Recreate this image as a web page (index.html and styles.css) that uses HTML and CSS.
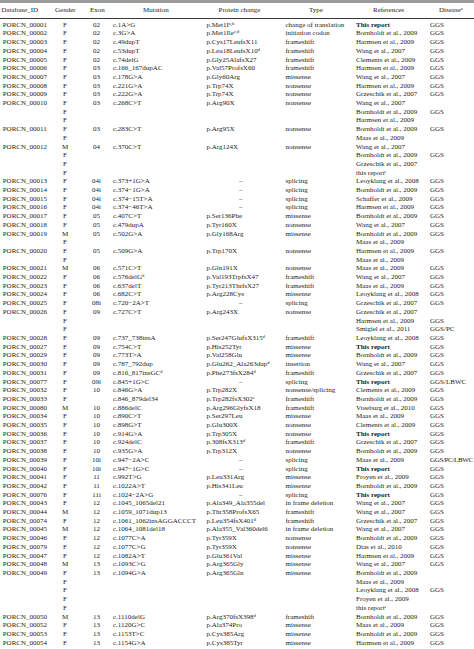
FILE: index.html
```html
<!DOCTYPE html>
<html>
<head>
<meta charset="utf-8">
<link rel="stylesheet" href="styles.css">
</head>
<body>
<table class="tbl">
<colgroup>
<col class="c-id"><col class="c-g"><col class="c-ex"><col class="c-mut"><col class="c-prot"><col class="c-type"><col class="c-ref"><col class="c-dis">
</colgroup>
<thead>
<tr>
<th class="h-id">Database_ID</th><th class="h-g">Gender</th><th class="h-ex">Exon</th><th class="h-mut">Mutation</th><th class="h-prot">Protein change</th><th class="h-type">Type</th><th class="h-ref">References</th><th class="h-dis">Disease<sup>a</sup></th>
</tr>
</thead>
<tbody>
<tr class="first"><td class="id">PORCN_00001</td><td class="g">F</td><td class="ex">02</td><td>c.1A&gt;G</td><td>p.Met1I<sup>a,b</sup></td><td>change of translation</td><td><b>This report</b></td><td>GGS</td></tr>
<tr><td class="id">PORCN_00002</td><td class="g">F</td><td class="ex">02</td><td>c.3G&gt;A</td><td>p.Met1Ile<sup>c,d</sup></td><td>initiation codon</td><td>Bornholdt et al., 2009</td><td>GGS</td></tr>
<tr><td class="id">PORCN_00003</td><td class="g">F</td><td class="ex">02</td><td>c.49dupT</td><td>p.Cys17LeufsX11</td><td>frameshift</td><td>Harmsen et al., 2009</td><td>GGS</td></tr>
<tr><td class="id">PORCN_00004</td><td class="g">F</td><td class="ex">02</td><td>c.53dupT</td><td>p.Leu18LeufsX10<sup>d</sup></td><td>frameshift</td><td>Wang et al., 2007</td><td>GGS</td></tr>
<tr><td class="id">PORCN_00005</td><td class="g">F</td><td class="ex">02</td><td>c.74delG</td><td>p.Gly25AlafsX27</td><td>frameshift</td><td>Clements et al., 2009</td><td>GGS</td></tr>
<tr><td class="id">PORCN_00006</td><td class="g">F</td><td class="ex">03</td><td>c.166_167dupAC</td><td>p.Val57ProfsX60</td><td>frameshift</td><td>Harmsen et al., 2009</td><td>GGS</td></tr>
<tr><td class="id">PORCN_00007</td><td class="g">F</td><td class="ex">03</td><td>c.178G&gt;A</td><td>p.Gly60Arg</td><td>missense</td><td>Wang et al., 2007</td><td>GGS</td></tr>
<tr><td class="id">PORCN_00008</td><td class="g">F</td><td class="ex">03</td><td>c.221G&gt;A</td><td>p.Trp74X</td><td>nonsense</td><td>Harmsen et al., 2009</td><td>GGS</td></tr>
<tr><td class="id">PORCN_00009</td><td class="g">F</td><td class="ex">03</td><td>c.222G&gt;A</td><td>p.Trp74X</td><td>nonsense</td><td>Grzeschik et al., 2007</td><td>GGS</td></tr>
<tr><td class="id">PORCN_00010</td><td class="g">F</td><td class="ex">03</td><td>c.268C&gt;T</td><td>p.Arg90X</td><td>nonsense</td><td>Wang et al., 2007</td><td></td></tr>
<tr><td class="id"></td><td class="g">F</td><td class="ex"></td><td></td><td></td><td></td><td>Bornholdt et al., 2009</td><td>GGS</td></tr>
<tr><td class="id"></td><td class="g">F</td><td class="ex"></td><td></td><td></td><td></td><td>Harmsen et al., 2009</td><td></td></tr>
<tr><td class="id">PORCN_00011</td><td class="g">F</td><td class="ex">03</td><td>c.283C&gt;T</td><td>p.Arg95X</td><td>nonsense</td><td>Bornholdt et al., 2009</td><td>GGS</td></tr>
<tr><td class="id"></td><td class="g">F</td><td class="ex"></td><td></td><td></td><td></td><td>Maas et al., 2009</td><td></td></tr>
<tr><td class="id">PORCN_00012</td><td class="g">M</td><td class="ex">04</td><td>c.370C&gt;T</td><td>p.Arg124X</td><td>nonsense</td><td>Wang et al., 2007</td><td></td></tr>
<tr><td class="id"></td><td class="g">F</td><td class="ex"></td><td></td><td></td><td></td><td>Bornholdt et al., 2009</td><td>GGS</td></tr>
<tr><td class="id"></td><td class="g">F</td><td class="ex"></td><td></td><td></td><td></td><td>Grzeschik et al., 2007</td><td></td></tr>
<tr><td class="id"></td><td class="g">F</td><td class="ex"></td><td></td><td></td><td></td><td>this report<sup>e</sup></td><td></td></tr>
<tr><td class="id">PORCN_00013</td><td class="g">F</td><td class="ex">04i</td><td>c.373+1G&gt;A</td><td class="dash">–</td><td>splicing</td><td>Leoyklang et al., 2008</td><td>GGS</td></tr>
<tr><td class="id">PORCN_00014</td><td class="g">F</td><td class="ex">04i</td><td>c.374−1G&gt;A</td><td class="dash">–</td><td>splicing</td><td>Bornholdt et al., 2009</td><td>GGS</td></tr>
<tr><td class="id">PORCN_00015</td><td class="g">F</td><td class="ex">04i</td><td>c.374−15T&gt;A</td><td class="dash">–</td><td>splicing</td><td>Schaffer et al., 2009</td><td>GGS</td></tr>
<tr><td class="id">PORCN_00016</td><td class="g">F</td><td class="ex">04i</td><td>c.374−46T&gt;A</td><td class="dash">–</td><td>splicing</td><td>Harmsen et al., 2009</td><td>GGS</td></tr>
<tr><td class="id">PORCN_00017</td><td class="g">F</td><td class="ex">05</td><td>c.407C&gt;T</td><td>p.Ser136Phe</td><td>missense</td><td>Bornholdt et al., 2009</td><td>GGS</td></tr>
<tr><td class="id">PORCN_00018</td><td class="g">F</td><td class="ex">05</td><td>c.479dupA</td><td>p.Tyr160X</td><td>nonsense</td><td>Wang et al., 2007</td><td>GGS</td></tr>
<tr><td class="id">PORCN_00019</td><td class="g">M</td><td class="ex">05</td><td>c.502G&gt;A</td><td>p.Gly168Arg</td><td>missense</td><td>Bornholdt et al., 2009</td><td>GGS</td></tr>
<tr><td class="id"></td><td class="g">F</td><td class="ex"></td><td></td><td></td><td></td><td>Maas et al., 2009</td><td></td></tr>
<tr><td class="id">PORCN_00020</td><td class="g">F</td><td class="ex">05</td><td>c.509G&gt;A</td><td>p.Trp170X</td><td>nonsense</td><td>Harmsen et al., 2009</td><td>GGS</td></tr>
<tr><td class="id"></td><td class="g">F</td><td class="ex"></td><td></td><td></td><td></td><td>Maas et al., 2009</td><td></td></tr>
<tr><td class="id">PORCN_00021</td><td class="g">M</td><td class="ex">06</td><td>c.571C&gt;T</td><td>p.Gln191X</td><td>nonsense</td><td>Maas et al., 2009</td><td>GGS</td></tr>
<tr><td class="id">PORCN_00022</td><td class="g">F</td><td class="ex">06</td><td>c.576delG<sup>d</sup></td><td>p.Val193TrpfsX47</td><td>frameshift</td><td>Wang et al., 2007</td><td>GGS</td></tr>
<tr><td class="id">PORCN_00023</td><td class="g">F</td><td class="ex">06</td><td>c.637delT</td><td>p.Tyr213ThrfsX27</td><td>frameshift</td><td>Maas et al., 2009</td><td>GGS</td></tr>
<tr><td class="id">PORCN_00024</td><td class="g">F</td><td class="ex">06</td><td>c.682C&gt;T</td><td>p.Arg228Cys</td><td>missense</td><td>Leoyklang et al., 2008</td><td>GGS</td></tr>
<tr><td class="id">PORCN_00025</td><td class="g">F</td><td class="ex">08i</td><td>c.720−2A&gt;T</td><td class="dash">–</td><td>splicing</td><td>Grzeschik et al., 2007</td><td>GGS</td></tr>
<tr><td class="id">PORCN_00026</td><td class="g">F</td><td class="ex">09</td><td>c.727C&gt;T</td><td>p.Arg243X</td><td>nonsense</td><td>Grzeschik et al., 2007</td><td></td></tr>
<tr><td class="id"></td><td class="g">F</td><td class="ex"></td><td></td><td></td><td></td><td>Harmsen et al., 2009</td><td>GGS</td></tr>
<tr><td class="id"></td><td class="g">F</td><td class="ex"></td><td></td><td></td><td></td><td>Smigiel et al., 2011</td><td>GGS/PC</td></tr>
<tr><td class="id">PORCN_00028</td><td class="g">F</td><td class="ex">09</td><td>c.737_738insA</td><td>p.Ser247GlufsX315<sup>d</sup></td><td>frameshift</td><td>Leoyklang et al., 2008</td><td>GGS</td></tr>
<tr><td class="id">PORCN_00027</td><td class="g">F</td><td class="ex">09</td><td>c.754C&gt;T</td><td>p.His252Tyr</td><td>missense</td><td><b>This report</b></td><td>GGS</td></tr>
<tr><td class="id">PORCN_00029</td><td class="g">F</td><td class="ex">09</td><td>c.773T&gt;A</td><td>p.Val258Glu</td><td>missense</td><td>Bornholdt et al., 2009</td><td>GGS</td></tr>
<tr><td class="id">PORCN_00030</td><td class="g">F</td><td class="ex">09</td><td>c.787_792dup</td><td>p.Glu262_Ala263dup<sup>d</sup></td><td>insertion</td><td>Wang et al., 2007</td><td>GGS</td></tr>
<tr><td class="id">PORCN_00031</td><td class="g">F</td><td class="ex">09</td><td>c.816_817insGC<sup>d</sup></td><td>p.Phe273fsX284<sup>d</sup></td><td>frameshift</td><td>Grzeschik et al., 2007</td><td>GGS</td></tr>
<tr><td class="id">PORCN_00077</td><td class="g">F</td><td class="ex">09i</td><td>c.845+1G&gt;C</td><td class="dash">–</td><td>splicing</td><td><b>This report</b></td><td>GGS/LBWC</td></tr>
<tr><td class="id">PORCN_00032</td><td class="g">F</td><td class="ex">10</td><td>c.846G&gt;A</td><td>p.Trp282X</td><td>nonsense/splicing</td><td>Clements et al., 2009</td><td>GGS</td></tr>
<tr><td class="id">PORCN_00033</td><td class="g">F</td><td class="ex"></td><td>c.846_879del34</td><td>p.Trp282fsX302<sup>e</sup></td><td>frameshift</td><td>Bornholdt et al., 2009</td><td>GGS</td></tr>
<tr><td class="id">PORCN_00080</td><td class="g">M</td><td class="ex">10</td><td>c.886delC</td><td>p.Arg296GlyfsX18</td><td>frameshift</td><td>Vreeburg et al., 2010</td><td>GGS</td></tr>
<tr><td class="id">PORCN_00034</td><td class="g">F</td><td class="ex">10</td><td>c.890C&gt;T</td><td>p.Ser297Leu</td><td>missense</td><td>Maas et al., 2009</td><td>GGS</td></tr>
<tr><td class="id">PORCN_00035</td><td class="g">F</td><td class="ex">10</td><td>c.898G&gt;T</td><td>p.Glu300X</td><td>nonsense</td><td>Clements et al., 2009</td><td>GGS</td></tr>
<tr><td class="id">PORCN_00036</td><td class="g">F</td><td class="ex">10</td><td>c.914G&gt;A</td><td>p.Trp305X</td><td>nonsense</td><td><b>This report</b></td><td>GGS</td></tr>
<tr><td class="id">PORCN_00037</td><td class="g">F</td><td class="ex">10</td><td>c.924delC</td><td>p.308fsX313<sup>d</sup></td><td>frameshift</td><td>Grzeschik et al., 2007</td><td>GGS</td></tr>
<tr><td class="id">PORCN_00038</td><td class="g">F</td><td class="ex">10</td><td>c.935G&gt;A</td><td>p.Trp312X</td><td>nonsense</td><td>Bornholdt et al., 2009</td><td>GGS</td></tr>
<tr><td class="id">PORCN_00039</td><td class="g">F</td><td class="ex">10i</td><td>c.947−2A&gt;C</td><td class="dash">–</td><td>splicing</td><td>Maas et al., 2009</td><td class="tight">GGS/PC/LBWC</td></tr>
<tr><td class="id">PORCN_00040</td><td class="g">F</td><td class="ex">10i</td><td>c.947−1G&gt;C</td><td class="dash">–</td><td>splicing</td><td><b>This report</b></td><td>GGS</td></tr>
<tr><td class="id">PORCN_00041</td><td class="g">F</td><td class="ex">11</td><td>c.992T&gt;G</td><td>p.Leu331Arg</td><td>missense</td><td>Froyen et al., 2009</td><td>GGS</td></tr>
<tr><td class="id">PORCN_00042</td><td class="g">F</td><td class="ex">11</td><td>c.1022A&gt;T</td><td>p.His341Leu</td><td>missense</td><td>Bornholdt et al., 2009</td><td>GGS</td></tr>
<tr><td class="id">PORCN_00076</td><td class="g">F</td><td class="ex">11i</td><td>c.1024−2A&gt;G</td><td class="dash">–</td><td>splicing</td><td><b>This report</b></td><td>GGS</td></tr>
<tr><td class="id">PORCN_00043</td><td class="g">F</td><td class="ex">12</td><td>c.1045_1065del21</td><td>p.Ala349_Ala355del</td><td>in frame deletion</td><td>Wang et al., 2007</td><td>GGS</td></tr>
<tr><td class="id">PORCN_00044</td><td class="g">M</td><td class="ex">12</td><td>c.1059_1071dup13</td><td>p.Thr358ProfsX65</td><td>frameshift</td><td>Wang et al., 2007</td><td>GGS</td></tr>
<tr><td class="id">PORCN_00074</td><td class="g">F</td><td class="ex">12</td><td>c.1061_1062insAGGACCCT</td><td>p.Leu354fsX401<sup>d</sup></td><td>frameshift</td><td>Grzeschik et al., 2007</td><td>GGS</td></tr>
<tr><td class="id">PORCN_00045</td><td class="g">M</td><td class="ex">12</td><td>c.1064_1081del18</td><td>p.Ala355_Val360del6</td><td>in frame deletion</td><td>Wang et al., 2007</td><td>GGS</td></tr>
<tr><td class="id">PORCN_00046</td><td class="g">F</td><td class="ex">12</td><td>c.1077C&gt;A</td><td>p.Tyr359X</td><td>nonsense</td><td>Bornholdt et al., 2009</td><td>GGS</td></tr>
<tr><td class="id">PORCN_00079</td><td class="g">F</td><td class="ex">12</td><td>c.1077C&gt;G</td><td>p.Tyr359X</td><td>nonsense</td><td>Dias et al., 2010</td><td>GGS</td></tr>
<tr><td class="id">PORCN_00047</td><td class="g">F</td><td class="ex">12</td><td>c.1082A&gt;T</td><td>p.Glu361Val</td><td>missense</td><td>Harmsen et al., 2009</td><td>GGS</td></tr>
<tr><td class="id">PORCN_00048</td><td class="g">M</td><td class="ex">13</td><td>c.1093C&gt;G</td><td>p.Arg365Gly</td><td>missense</td><td>Wang et al., 2007</td><td>GGS</td></tr>
<tr><td class="id">PORCN_00049</td><td class="g">F</td><td class="ex">13</td><td>c.1094G&gt;A</td><td>p.Arg365Gln</td><td>missense</td><td>Bornholdt et al., 2009</td><td></td></tr>
<tr><td class="id"></td><td class="g">F</td><td class="ex"></td><td></td><td></td><td></td><td>Maas et al., 2009</td><td></td></tr>
<tr><td class="id"></td><td class="g">F</td><td class="ex"></td><td></td><td></td><td></td><td>Leoyklang et al., 2008</td><td>GGS</td></tr>
<tr><td class="id"></td><td class="g">F</td><td class="ex"></td><td></td><td></td><td></td><td>Froyen et al., 2009</td><td></td></tr>
<tr><td class="id"></td><td class="g">F</td><td class="ex"></td><td></td><td></td><td></td><td>this report<sup>e</sup></td><td></td></tr>
<tr><td class="id">PORCN_00050</td><td class="g">M</td><td class="ex">13</td><td>c.1110delG</td><td>p.Arg370fsX398<sup>d</sup></td><td>frameshift</td><td>Bornholdt et al., 2009</td><td>GGS</td></tr>
<tr><td class="id">PORCN_00052</td><td class="g">F</td><td class="ex">13</td><td>c.1120G&gt;C</td><td>p.Ala374Pro</td><td>missense</td><td>Maas et al., 2009</td><td>GGS</td></tr>
<tr><td class="id">PORCN_00053</td><td class="g">F</td><td class="ex">13</td><td>c.1153T&gt;C</td><td>p.Cys385Arg</td><td>missense</td><td>Bornholdt et al., 2009</td><td>GGS</td></tr>
<tr><td class="id">PORCN_00054</td><td class="g">F</td><td class="ex">13</td><td>c.1154G&gt;A</td><td>p.Cys385Tyr</td><td>missense</td><td>Harmsen et al., 2009</td><td>GGS</td></tr>
</tbody>
</table>
</body>
</html>
```
FILE: styles.css
```css
html, body {
  margin: 0;
  padding: 0;
  background: #ffffff;
}
body {
  font-family: "Liberation Serif", "Times New Roman", serif;
  font-size: 7px;
  color: #1c1c1c;
}
.tbl {
  width: 474px;
  table-layout: fixed;
  border-collapse: collapse;
  border-spacing: 0;
  border-top: 3px solid #9a9a9a;
}
.c-id { width: 50px; }
.c-g { width: 30px; }
.c-ex { width: 33px; }
.c-mut { width: 93.5px; }
.c-prot { width: 79px; }
.c-type { width: 70.5px; }
.c-ref { width: 74px; }
.c-dis { width: 44px; }

th {
  font-weight: normal;
  text-align: left;
  height: 15px;
  padding: 0;
  line-height: 15px;
  white-space: nowrap;
  border-bottom: 0.8px solid #3a3a3a;
  overflow: visible;
}
.h-id { padding-left: 1.5px; }
.h-g { padding-left: 5px; }
.h-ex { padding-left: 10px; }
.h-mut { padding-left: 30px; }
.h-prot { padding-left: 12px; }
.h-type { padding-left: 23.5px; }
.h-ref { padding-left: 17px; }
.h-dis { padding-left: 9px; }

td {
  padding: 0;
  height: 8.7px;
  line-height: 8.7px;
  white-space: nowrap;
  overflow: visible;
  vertical-align: middle;
}
tr.first td {
  padding-top: 1.7px;
}
td.id { padding-left: 2.7px; }
td.g { text-align: center; }
td.ex { text-align: center; }
td.dash { padding-left: 32.5px; }
td.tight { letter-spacing: -0.35px; }
b { font-weight: bold; }
sup {
  font-size: 4.5px;
  line-height: 0;
  vertical-align: 2.5px;
}
```
